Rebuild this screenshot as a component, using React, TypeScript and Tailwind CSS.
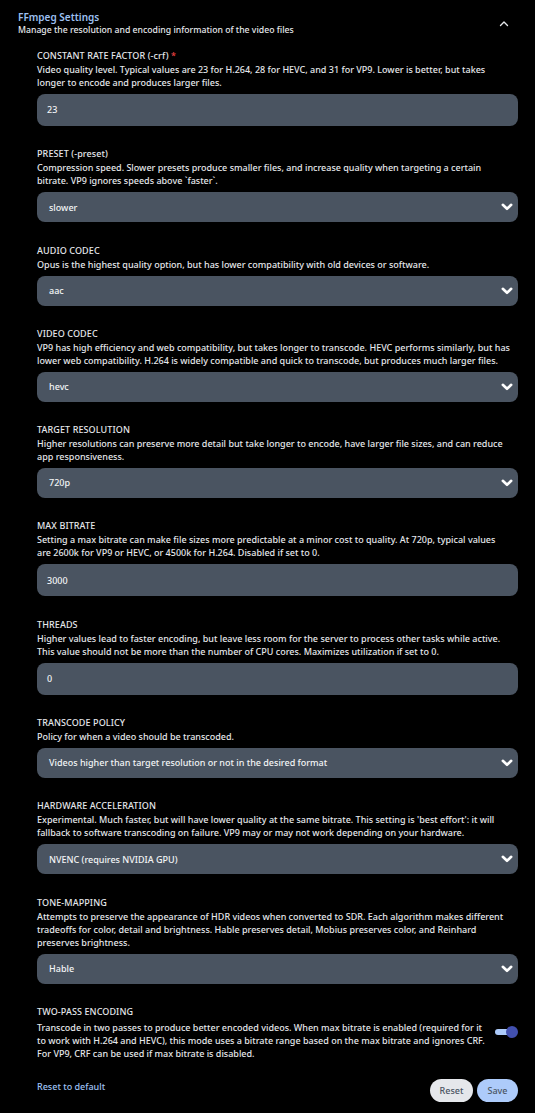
import React from "react";

type Item = {
  label: string;
  required?: boolean;
  desc: string[];
  kind: "input" | "select";
  value: string;
};

const items: Item[] = [
  {
    label: "CONSTANT RATE FACTOR (-crf)",
    required: true,
    desc: [
      "Video quality level. Typical values are 23 for H.264, 28 for HEVC, and 31 for VP9. Lower is better, but takes",
      "longer to encode and produces larger files.",
    ],
    kind: "input",
    value: "23",
  },
  {
    label: "PRESET (-preset)",
    desc: [
      "Compression speed. Slower presets produce smaller files, and increase quality when targeting a certain",
      "bitrate. VP9 ignores speeds above `faster`.",
    ],
    kind: "select",
    value: "slower",
  },
  {
    label: "AUDIO CODEC",
    desc: ["Opus is the highest quality option, but has lower compatibility with old devices or software."],
    kind: "select",
    value: "aac",
  },
  {
    label: "VIDEO CODEC",
    desc: [
      "VP9 has high efficiency and web compatibility, but takes longer to transcode. HEVC performs similarly, but has",
      "lower web compatibility. H.264 is widely compatible and quick to transcode, but produces much larger files.",
    ],
    kind: "select",
    value: "hevc",
  },
  {
    label: "TARGET RESOLUTION",
    desc: [
      "Higher resolutions can preserve more detail but take longer to encode, have larger file sizes, and can reduce",
      "app responsiveness.",
    ],
    kind: "select",
    value: "720p",
  },
  {
    label: "MAX BITRATE",
    desc: [
      "Setting a max bitrate can make file sizes more predictable at a minor cost to quality. At 720p, typical values",
      "are 2600k for VP9 or HEVC, or 4500k for H.264. Disabled if set to 0.",
    ],
    kind: "input",
    value: "3000",
  },
  {
    label: "THREADS",
    desc: [
      "Higher values lead to faster encoding, but leave less room for the server to process other tasks while active.",
      "This value should not be more than the number of CPU cores. Maximizes utilization if set to 0.",
    ],
    kind: "input",
    value: "0",
  },
  {
    label: "TRANSCODE POLICY",
    desc: ["Policy for when a video should be transcoded."],
    kind: "select",
    value: "Videos higher than target resolution or not in the desired format",
  },
  {
    label: "HARDWARE ACCELERATION",
    desc: [
      "Experimental. Much faster, but will have lower quality at the same bitrate. This setting is 'best effort': it will",
      "fallback to software transcoding on failure. VP9 may or may not work depending on your hardware.",
    ],
    kind: "select",
    value: "NVENC (requires NVIDIA GPU)",
  },
  {
    label: "TONE-MAPPING",
    desc: [
      "Attempts to preserve the appearance of HDR videos when converted to SDR. Each algorithm makes different",
      "tradeoffs for color, detail and brightness. Hable preserves detail, Mobius preserves color, and Reinhard",
      "preserves brightness.",
    ],
    kind: "select",
    value: "Hable",
  },
];

const twoPass = [
  "Transcode in two passes to produce better encoded videos. When max bitrate is enabled (required for it",
  "to work with H.264 and HEVC), this mode uses a bitrate range based on the max bitrate and ignores CRF.",
  "For VP9, CRF can be used if max bitrate is disabled.",
];

function ChevronDown() {
  return (
    <svg width="12" height="8" viewBox="0 0 12 8" fill="none" className="shrink-0">
      <path d="M1.8 1.8 L6 5.8 L10.2 1.8" stroke="#ffffff" strokeWidth="2.6" strokeLinecap="round" strokeLinejoin="round" />
    </svg>
  );
}

function Desc({ lines }: { lines: string[] }) {
  return (
    <p className="text-[9px] leading-[13px] font-medium text-[#e5e7eb]">
      {lines.map((l, i) => (
        <span key={i} className="block whitespace-nowrap">
          {l}
        </span>
      ))}
    </p>
  );
}

function Field({ item }: { item: Item }) {
  return (
    <div className="flex flex-col">
      <div className="text-[9px] leading-[14px] font-medium text-[#e5e7eb] tracking-[0.1px]">
        {item.label}
        {item.required && <span className="text-[#ef4444]"> *</span>}
      </div>
      <Desc lines={item.desc} />
      {item.kind === "input" ? (
        <div className="mt-[5px] h-[32px] rounded-[8px] bg-[#4a5461] flex items-center pl-[10px] text-[9px] font-medium text-[#f3f4f6]">
          {item.value}
        </div>
      ) : (
        <div className="mt-[5px] h-[30px] rounded-[8px] bg-[#4a5461] flex items-center justify-between pl-[12px] pr-[5px] text-[9px] font-medium text-[#f3f4f6]">
          <span>{item.value}</span>
          <ChevronDown />
        </div>
      )}
    </div>
  );
}

export default function App() {
  return (
    <div
      className="min-h-screen w-full bg-black text-white"
      style={{ fontFamily: '"Noto Sans", "Open Sans", sans-serif' }}
    >
      <div className="pt-[10px] pl-[18px] pr-[26px] flex justify-between items-start">
        <div>
          <div className="text-[10px] leading-[14px] font-semibold text-[#9ec0f2]">FFmpeg Settings</div>
          <div className="text-[8.7px] leading-[13px] font-medium text-[#e5e7eb]">
            Manage the resolution and encoding information of the video files
          </div>
        </div>
        <svg width="10" height="7" viewBox="0 0 10 7" fill="none" className="mt-[10px]">
          <path d="M1.5 5.5 L5 2 L8.5 5.5" stroke="#e5e7eb" strokeWidth="1.4" strokeLinecap="round" strokeLinejoin="round" />
        </svg>
      </div>

      <div className="pl-[37px] pr-[17px] pt-[12px] flex flex-col gap-[21.3px]">
        {items.map((it) => (
          <Field key={it.label} item={it} />
        ))}

        <div className="flex flex-col">
          <div className="text-[9px] leading-[14px] font-medium text-[#e5e7eb] tracking-[0.1px]">TWO-PASS ENCODING</div>
          <div className="flex items-start justify-between gap-[8px]">
            <div className="mt-[2px]">
              <Desc lines={twoPass} />
            </div>
            <div className="relative mt-[7px] w-[23px] h-[12px] shrink-0 flex items-center">
              <div className="h-[6px] w-[20px] rounded-full bg-[#adcbfa]" />
              <div className="absolute right-0 top-0 h-[12px] w-[12px] rounded-full bg-[#4250af]" />
            </div>
          </div>
        </div>

        <div className="flex justify-between items-start mt-[-2px]">
          <button className="mt-[1px] text-[9px] leading-[14px] font-medium text-[#9ec0f2]">Reset to default</button>
          <div className="flex gap-[4px]">
            <button className="h-[23px] w-[43px] rounded-full bg-[#e5e7eb] text-[9px] font-medium text-[#4b5563]">Reset</button>
            <button className="h-[23px] w-[41px] rounded-full bg-[#adcbfa] text-[9px] font-medium text-[#4b5563]">Save</button>
          </div>
        </div>
      </div>
    </div>
  );
}
